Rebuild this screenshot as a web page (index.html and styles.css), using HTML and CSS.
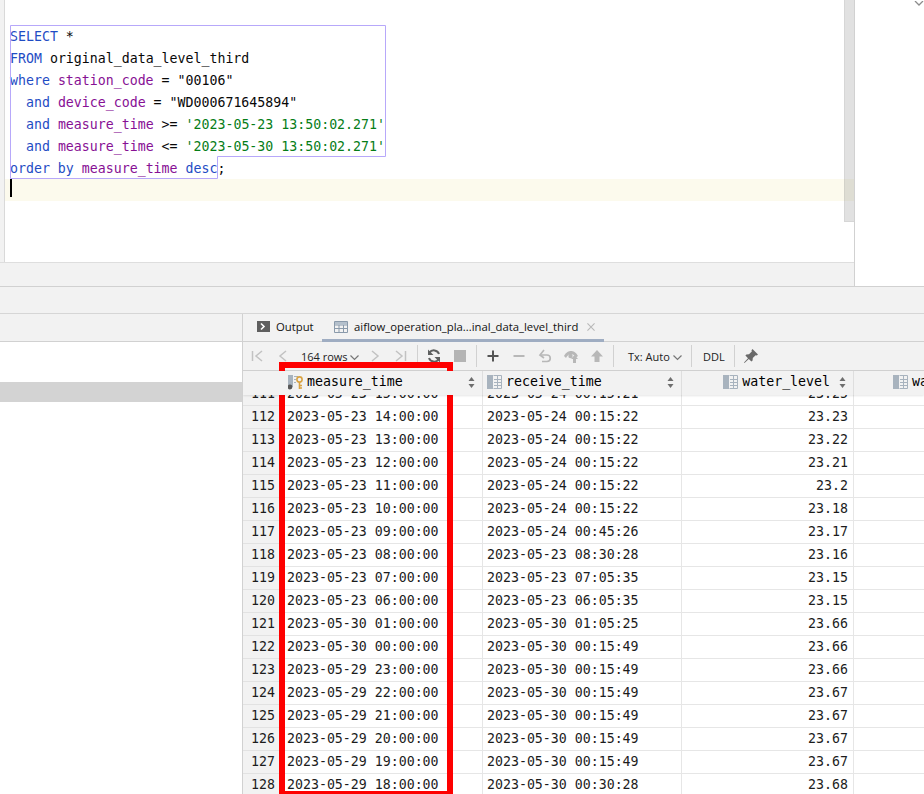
FILE: index.html
```html
<!DOCTYPE html>
<html lang="en">

<head>
  <meta charset="UTF-8">
  <title>Query console</title>
  <link rel="stylesheet" href="styles.css">
</head>

<body>
  <svg class="defs" width="0" height="0">
    <symbol id="col" viewBox="0 0 15 14">
      <rect x="0" y="0" width="6" height="14" fill="#a8b3be" />
      <path d="M6.5 .5H14.5V13.5H6.5M7 4.5H14M7 7.5H14M7 10.5H14M10.5 1V13" fill="none" stroke="#a8b3be" />
    </symbol>
    <symbol id="sort" viewBox="0 0 7 11">
      <path d="M3.5 0L6.5 4H.5ZM3.5 11L.5 7H6.5Z" fill="#6e6e6e" />
    </symbol>
  </svg>

  <div class="top">
    <div class="main">
      <div class="editor">
        <div class="gutter"></div>
        <div class="code">
          <div class="line"><span class="kw">SELECT</span> *</div>
          <div class="line"><span class="kw">FROM</span> original_data_level_third</div>
          <div class="line"><span class="kw">where</span> <span class="colname">station_code</span> = "00106"</div>
          <div class="line">  <span class="kw">and</span> <span class="colname">device_code</span> = "WD000671645894"</div>
          <div class="line">  <span class="kw">and</span> <span class="colname">measure_time</span> &gt;= <span class="str">'2023-05-23 13:50:02.271'</span></div>
          <div class="line">  <span class="kw">and</span> <span class="colname">measure_time</span> &lt;= <span class="str">'2023-05-30 13:50:02.271'</span></div>
          <div class="line"><span class="kw">order by</span> <span class="colname">measure_time</span> <span class="kw">desc</span>;</div>
          <div class="line current"><span class="caret"></span></div>
          <svg class="stmt" width="400" height="180">
            <path d="M10.5 25.5H385.5V156.5H217.5V178.5H10.5Z" fill="none" stroke="#b7a8fa" />
          </svg>
        </div>
        <div class="scrollbar"></div>
      </div>
      <div class="band"></div>
    </div>
    <div class="side">
      <svg class="side-arrow" width="10" height="6" viewBox="0 0 10 6">
        <path d="M1 0L5 4L9 0" fill="none" stroke="#8c8c8c" stroke-width="1.3" />
      </svg>
    </div>
  </div>

  <div class="band2"></div>

  <div class="bottom">
    <div class="left">
      <div class="left-head"></div>
      <div class="left-list">
        <div class="left-sel"></div>
      </div>
    </div>

    <div class="results">
      <div class="tabs">
        <div class="tab">
          <svg width="13" height="11" viewBox="0 0 13 11">
            <rect width="13" height="11" fill="#5f5f5f" />
            <path d="M4 2.5L7 5.5L4 8.5" fill="none" stroke="#fff" stroke-width="1.6" />
          </svg>
          <span>Output</span>
        </div>
        <div class="tab active">
          <svg width="14" height="12" viewBox="0 0 14 12">
            <path d="M.5 .5H13.5V11.5H.5ZM1 4H13M1 7.5H13M5 4V11M9.5 4V11" fill="none" stroke="#8a9aab" />
            <rect x="1" y="1" width="12" height="3" fill="#b4c0cc" />
          </svg>
          <span>aiflow_operation_pla...inal_data_level_third</span>
          <svg class="tab-close" width="8" height="8" viewBox="0 0 9 9">
            <path d="M.5 .5L8.5 8.5M8.5 .5L.5 8.5" stroke="#b8b8b8" stroke-width="1.2" />
          </svg>
        </div>
      </div>

      <div class="toolbar">
        <div class="tool"><svg width="16" height="16" viewBox="0 0 16 16"><path d="M3.5 3V13M13 3L7 8L13 13" fill="none" stroke="#c2c2c2" stroke-width="1.5" /></svg></div>
        <div class="tool"><svg width="16" height="16" viewBox="0 0 16 16"><path d="M11 3L5 8L11 13" fill="none" stroke="#c2c2c2" stroke-width="1.5" /></svg></div>
        <div class="rows-count"><b>164</b> rows <svg width="9" height="6" viewBox="0 0 9 6"><path d="M.5 .5L4.5 4.5L8.5 .5" fill="none" stroke="#777" stroke-width="1.2" /></svg></div>
        <div class="tool"><svg width="16" height="16" viewBox="0 0 16 16"><path d="M5 3L11 8L5 13" fill="none" stroke="#c2c2c2" stroke-width="1.5" /></svg></div>
        <div class="tool"><svg width="16" height="16" viewBox="0 0 16 16"><path d="M3 3L9 8L3 13M12.5 3V13" fill="none" stroke="#c2c2c2" stroke-width="1.5" /></svg></div>
        <div class="sep"></div>
        <div class="tool"><svg width="16" height="16" viewBox="0 0 16 16"><path d="M13 6A5.5 5.5 0 0 0 3.4 4.6M3 10A5.5 5.5 0 0 0 12.6 11.4" fill="none" stroke="#5e6060" stroke-width="2" /><path d="M2 1.5V7H7.5ZM14 14.5V9H8.5Z" fill="#5e6060" /></svg></div>
        <div class="tool"><svg width="16" height="16" viewBox="0 0 16 16"><rect x="2" y="2" width="12" height="12" fill="#b4b4b4" /></svg></div>
        <div class="sep"></div>
        <div class="tool"><svg width="16" height="16" viewBox="0 0 16 16"><path d="M8 2.5V13.5M2.5 8H13.5" stroke="#555" stroke-width="2" /></svg></div>
        <div class="tool"><svg width="16" height="16" viewBox="0 0 16 16"><path d="M2.5 8H13.5" stroke="#b8b8b8" stroke-width="2" /></svg></div>
        <div class="tool"><svg width="16" height="16" viewBox="0 0 16 16"><path d="M4 7H10A3.2 3.2 0 0 1 10 13.5H5" fill="none" stroke="#b8b8b8" stroke-width="1.7" /><path d="M7 2L3 7L7 10" fill="none" stroke="#b8b8b8" stroke-width="1.7" /></svg></div>
        <div class="tool"><svg width="16" height="16" viewBox="0 0 16 16"><path d="M1 8C3 4 6 3 8 3S13 4 15 8L13 9.5C11 6.5 9.5 6 8 6S5 6.5 3 10Z" fill="#b8b8b8" /><circle cx="7.5" cy="8" r="2.2" fill="#b8b8b8" /><path d="M11.5 7L15 11H13V15H10V11H8Z" fill="#b8b8b8" /></svg></div>
        <div class="tool"><svg width="16" height="16" viewBox="0 0 16 16"><path d="M8 2L14 8.5H10.5V14H5.5V8.5H2Z" fill="#b8b8b8" /></svg></div>
        <div class="sep"></div>
        <div class="tool-text tx">Tx: Auto <svg width="9" height="6" viewBox="0 0 9 6"><path d="M.5 .5L4.5 4.5L8.5 .5" fill="none" stroke="#777" stroke-width="1.2" /></svg></div>
        <div class="sep"></div>
        <div class="tool-text ddl">DDL</div>
        <div class="sep"></div>
        <div class="tool"><svg width="16" height="16" viewBox="0 0 16 16"><path d="M9.5 1L15 6.5L13.8 7.5L12.6 7.2L9.8 10L9.6 12.6L8.4 13.6L5.8 11L1.5 15L1 14.5L5 10.2L2.4 7.6L3.4 6.4L6 6.2L8.8 3.4L8.5 2.2Z" fill="#6a6a6a" /></svg></div>
      </div>

      <div class="grid">
        <div class="row head">
          <div class="cell num"></div>
          <div class="cell">
            <svg class="key-ic" width="16" height="15" viewBox="0 0 16 15">
              <rect x="0" y="0" width="5" height="12" fill="#a8b3be" />
              <path d="M6 1.5H10M6 4.5H8M6 7.5H8" stroke="#a8b3be" />
              <circle cx="2" cy="12" r="2.4" fill="#585858" />
              <circle cx="11.5" cy="4.5" r="2.6" fill="none" stroke="#d9a343" stroke-width="1.6" />
              <path d="M11.5 7V14M11.5 10.5H14M11.5 13H14" fill="none" stroke="#d9a343" stroke-width="1.6" />
            </svg>
            <span class="col-title">measure_time</span>
            <svg class="sort" width="7" height="11"><use href="#sort" /></svg>
          </div>
          <div class="cell">
            <svg class="col-ic" width="15" height="14"><use href="#col" /></svg>
            <span class="col-title">receive_time</span>
            <svg class="sort" width="7" height="11"><use href="#sort" /></svg>
          </div>
          <div class="cell right">
            <svg class="col-ic" width="15" height="14"><use href="#col" /></svg>
            <span class="col-title">water_level</span>
            <svg class="sort" width="7" height="11"><use href="#sort" /></svg>
          </div>
          <div class="cell last">
            <svg class="col-ic" width="15" height="14"><use href="#col" /></svg>
            <span class="col-title">water_level_rate</span>
          </div>
        </div>

        <div class="body">
          <div class="row scrolled"><div class="cell num">111</div><div class="cell">2023-05-23 15:00:00</div><div class="cell">2023-05-24 00:15:21</div><div class="cell right">23.25</div><div class="cell"></div></div>
          <div class="row"><div class="cell num">112</div><div class="cell">2023-05-23 14:00:00</div><div class="cell">2023-05-24 00:15:22</div><div class="cell right">23.23</div><div class="cell"></div></div>
          <div class="row"><div class="cell num">113</div><div class="cell">2023-05-23 13:00:00</div><div class="cell">2023-05-24 00:15:22</div><div class="cell right">23.22</div><div class="cell"></div></div>
          <div class="row"><div class="cell num">114</div><div class="cell">2023-05-23 12:00:00</div><div class="cell">2023-05-24 00:15:22</div><div class="cell right">23.21</div><div class="cell"></div></div>
          <div class="row"><div class="cell num">115</div><div class="cell">2023-05-23 11:00:00</div><div class="cell">2023-05-24 00:15:22</div><div class="cell right">23.2</div><div class="cell"></div></div>
          <div class="row"><div class="cell num">116</div><div class="cell">2023-05-23 10:00:00</div><div class="cell">2023-05-24 00:15:22</div><div class="cell right">23.18</div><div class="cell"></div></div>
          <div class="row"><div class="cell num">117</div><div class="cell">2023-05-23 09:00:00</div><div class="cell">2023-05-24 00:45:26</div><div class="cell right">23.17</div><div class="cell"></div></div>
          <div class="row"><div class="cell num">118</div><div class="cell">2023-05-23 08:00:00</div><div class="cell">2023-05-23 08:30:28</div><div class="cell right">23.16</div><div class="cell"></div></div>
          <div class="row"><div class="cell num">119</div><div class="cell">2023-05-23 07:00:00</div><div class="cell">2023-05-23 07:05:35</div><div class="cell right">23.15</div><div class="cell"></div></div>
          <div class="row"><div class="cell num">120</div><div class="cell">2023-05-23 06:00:00</div><div class="cell">2023-05-23 06:05:35</div><div class="cell right">23.15</div><div class="cell"></div></div>
          <div class="row"><div class="cell num">121</div><div class="cell">2023-05-30 01:00:00</div><div class="cell">2023-05-30 01:05:25</div><div class="cell right">23.66</div><div class="cell"></div></div>
          <div class="row"><div class="cell num">122</div><div class="cell">2023-05-30 00:00:00</div><div class="cell">2023-05-30 00:15:49</div><div class="cell right">23.66</div><div class="cell"></div></div>
          <div class="row"><div class="cell num">123</div><div class="cell">2023-05-29 23:00:00</div><div class="cell">2023-05-30 00:15:49</div><div class="cell right">23.66</div><div class="cell"></div></div>
          <div class="row"><div class="cell num">124</div><div class="cell">2023-05-29 22:00:00</div><div class="cell">2023-05-30 00:15:49</div><div class="cell right">23.67</div><div class="cell"></div></div>
          <div class="row"><div class="cell num">125</div><div class="cell">2023-05-29 21:00:00</div><div class="cell">2023-05-30 00:15:49</div><div class="cell right">23.67</div><div class="cell"></div></div>
          <div class="row"><div class="cell num">126</div><div class="cell">2023-05-29 20:00:00</div><div class="cell">2023-05-30 00:15:49</div><div class="cell right">23.67</div><div class="cell"></div></div>
          <div class="row"><div class="cell num">127</div><div class="cell">2023-05-29 19:00:00</div><div class="cell">2023-05-30 00:15:49</div><div class="cell right">23.67</div><div class="cell"></div></div>
          <div class="row"><div class="cell num">128</div><div class="cell">2023-05-29 18:00:00</div><div class="cell">2023-05-30 00:30:28</div><div class="cell right">23.68</div><div class="cell"></div></div>
        </div>
      </div>

      <div class="red-box"></div>
    </div>
  </div>
</body>

</html>
```

FILE: styles.css
```css
html,
body {
  margin: 0;
  height: 794px;
  overflow: hidden;
  background: #fff;
  font-family: "Open Sans", "Liberation Sans", sans-serif;
}

.defs {
  position: absolute;
}

.top {
  display: flex;
  height: 287px;
  border-bottom: 1px solid #d1d1d1;
  box-sizing: border-box;
}

.main {
  width: 854px;
  display: flex;
  flex-direction: column;
}

.editor {
  height: 262px;
  display: flex;
  position: relative;
}

.gutter {
  width: 4px;
  background: #f2f2f2;
  border-right: 1px solid #d9d9d9;
}

.code {
  flex: 1;
  box-sizing: border-box;
  padding-top: 25px;
  font-family: "DejaVu Sans Mono", "Liberation Mono", monospace;
  font-size: 13.25px;
  color: #080808;
}

.line {
  height: 22px;
  line-height: 24px;
  padding-left: 5px;
  white-space: pre;
}

.kw {
  color: #1f4cc4;
}

.colname {
  color: #871094;
}

.str {
  color: #067d17;
}

.current {
  background: #fcfaed;
}

.caret {
  display: inline-block;
  width: 2px;
  height: 18px;
  background: #000;
  vertical-align: -2px;
}

.stmt {
  position: absolute;
  left: 0;
  top: 0;
}

.scrollbar {
  position: absolute;
  left: 844px;
  top: 0;
  width: 10px;
  height: 222px;
  box-sizing: border-box;
  background: rgba(120, 120, 120, .22);
  border-left: 1px solid rgba(120, 120, 120, .1);
  border-bottom: 1px solid rgba(120, 120, 120, .1);
}

.band {
  flex: 1;
  background: #f2f2f2;
  border-top: 1px solid #dedede;
}

.side {
  flex: 1;
  border-left: 1px solid #d1d1d1;
  position: relative;
}

.side-arrow {
  position: absolute;
  right: 0;
  top: 1px;
}

.band2 {
  height: 27px;
  box-sizing: border-box;
  background: #f2f2f2;
  border-bottom: 1px solid #d6d6d6;
}

.bottom {
  display: flex;
  height: 480px;
}

.left {
  width: 243px;
  box-sizing: border-box;
  border-right: 1px solid #d1d1d1;
}

.left-head {
  height: 28px;
  box-sizing: border-box;
  background: #f2f2f2;
  border-bottom: 1px solid #d1d1d1;
}

.left-list {
  padding-top: 40px;
}

.left-sel {
  height: 20px;
  background: #d3d3d3;
}

.results {
  flex: 1;
  position: relative;
  overflow: hidden;
}

.tabs {
  height: 28px;
  box-sizing: border-box;
  display: flex;
  background: #f2f2f2;
  border-bottom: 1px solid #d1d1d1;
  font-size: 11.3px;
  color: #111;
}

.tab {
  display: flex;
  align-items: center;
  gap: 6px;
  padding: 0 0 2px 14px;
  width: 79px;
  box-sizing: border-box;
}

.tab.active {
  width: 282px;
  padding-left: 12px;
  border-bottom: 3px solid #9fadc2;
  height: 28px;
  padding-bottom: 0;
}

.tab-close {
  margin-left: 3px;
}

.toolbar {
  height: 29px;
  box-sizing: border-box;
  display: flex;
  align-items: center;
  padding-left: 1px;
  background: #f2f2f2;
  border-bottom: 1px solid #d1d1d1;
  font-size: 11px;
  color: #222;
}

.tool {
  width: 26px;
  display: flex;
  justify-content: center;
}

.rows-count {
  width: 66px;
  padding-left: 5px;
  box-sizing: border-box;
  white-space: nowrap;
}

.rows-count b {
  font-weight: 400;
}

.sep {
  width: 1px;
  height: 22px;
  margin: 0 3px;
  background: #d1d1d1;
}

.tool-text {
  box-sizing: border-box;
  white-space: nowrap;
}

.tx {
  width: 71px;
  padding-left: 11px;
}

.ddl {
  width: 36px;
  padding-left: 8px;
}

.grid {
  font-family: "DejaVu Sans Mono", "Liberation Mono", monospace;
  font-size: 13.25px;
  color: #1c1c1c;
}

.row {
  display: grid;
  grid-template-columns: 39px 201px 199px 172px 1fr;
  height: 23px;
  line-height: 22px;
}

.cell {
  box-sizing: border-box;
  padding: 0 5px;
  border-right: 1px solid #e6e6e6;
  border-bottom: 1px solid #e6e6e6;
  white-space: nowrap;
}

.cell:last-child {
  border-right: 0;
}

.cell:nth-child(3) {
  padding-left: 4px;
}

.num {
  background: #f2f2f2;
  text-align: right;
  padding: 0 7px 0 0;
  border-right: 0;
  border-bottom-color: #e2e2e2;
}

.right {
  text-align: right;
}

.head {
  height: 24px;
  position: relative;
  z-index: 1;
  box-shadow: 0 1px 2px rgba(0, 0, 0, .1);
  color: #000;
}

.head .cell {
  background: #f2f2f2;
  display: flex;
  align-items: center;
  border-right-color: #dedede;
  border-bottom: 0;
  padding-bottom: 2px;
}

.head .right {
  justify-content: flex-end;
}

.col-ic,
.key-ic {
  margin-right: 4px;
  flex: none;
}

.key-ic {
  margin-left: 1px;
  margin-right: 3px;
}

.sort {
  margin-left: auto;
  flex: none;
  margin-right: 2px;
}

.head .right .col-ic {
  margin-left: auto;
}

.head .right .sort {
  margin-left: 9px;
}

.last {
  padding-left: 39px;
}

.body {
  height: 399px;
  overflow: hidden;
}

.scrolled {
  margin-top: -12px;
}

.red-box {
  position: absolute;
  left: 36px;
  top: 48px;
  width: 174px;
  height: 435px;
  box-sizing: border-box;
  border: 6px solid #fe0000;
}
```
